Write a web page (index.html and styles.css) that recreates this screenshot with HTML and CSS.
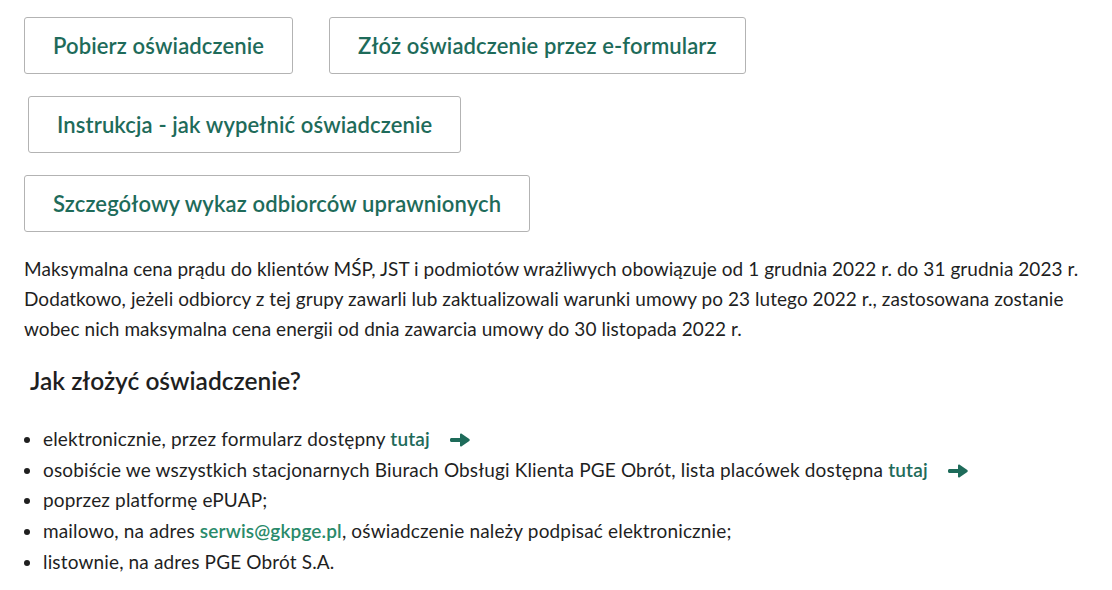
FILE: index.html
```html
<!DOCTYPE html>
<html lang="pl">
<head>
<meta charset="utf-8">
<title>Oświadczenie</title>
<link rel="stylesheet" href="styles.css">
</head>
<body>
	<div id="content">
		<div class="buttons">
			<a class="btn" href="#">Pobierz oświadczenie</a>
			<a class="btn" href="#">Złóż oświadczenie przez e-formularz</a>
		</div>
		<div class="buttons">
			<a class="btn shifted" href="#">Instrukcja - jak wypełnić oświadczenie</a>
		</div>
		<div class="buttons">
			<a class="btn" href="#">Szczegółowy wykaz odbiorców uprawnionych</a>
		</div>

		<p class="lead">Maksymalna cena prądu do klientów MŚP, JST i podmiotów wrażliwych obowiązuje od 1 grudnia 2022 r. do 31 grudnia 2023 r. Dodatkowo, jeżeli odbiorcy z tej grupy zawarli lub zaktualizowali warunki umowy po 23 lutego 2022 r., zastosowana zostanie wobec nich maksymalna cena energii od dnia zawarcia umowy do 30 listopada 2022 r.</p>

		<h3>Jak złożyć oświadczenie?</h3>

		<ul class="ways">
			<li>elektronicznie, przez formularz dostępny <a href="#">tutaj</a>
				<svg class="arrow" viewBox="0 0 20 14"><path d="M1.5 5h8.5V1.6c0-.9 1-1.4 1.7-.9l7.6 5.4c.6.4.6 1.4 0 1.8l-7.6 5.4c-.7.5-1.7 0-1.7-.9V9H1.5C.7 9 0 8.3 0 7.5v-1C0 5.7.7 5 1.5 5z"/></svg>
			</li>
			<li>osobiście we wszystkich stacjonarnych Biurach Obsługi Klienta PGE Obrót, lista placówek dostępna <a href="#">tutaj</a>
				<svg class="arrow" viewBox="0 0 20 14"><path d="M1.5 5h8.5V1.6c0-.9 1-1.4 1.7-.9l7.6 5.4c.6.4.6 1.4 0 1.8l-7.6 5.4c-.7.5-1.7 0-1.7-.9V9H1.5C.7 9 0 8.3 0 7.5v-1C0 5.7.7 5 1.5 5z"/></svg>
			</li>
			<li>poprzez platformę ePUAP;</li>
			<li>mailowo, na adres <a class="mail" href="#">serwis@gkpge.pl</a>, oświadczenie należy podpisać elektronicznie;</li>
			<li>listownie, na adres PGE Obrót S.A.</li>
		</ul>
	</div>
</body>
</html>
```

FILE: styles.css
```css
body {
	margin: 0;
	background: #fff;
	color: #1f1f1f;
	font-family: Lato, "Noto Sans", sans-serif;
}
#content {
	padding: 17px 20px 0 24px;
}
.buttons {
	display: flex;
	gap: 36px;
	margin-bottom: 22px;
}
.btn {
	display: block;
	height: 55px;
	line-height: 55px;
	padding: 0 28px;
	border: 1px solid #b3b3b3;
	border-radius: 3px;
	color: #1e6b5a;
	font-size: 22px;
	font-weight: 600;
	letter-spacing: 0.12px;
	text-decoration: none;
}
.btn.shifted {
	margin-left: 4px;
}
.lead {
	margin: 0;
	font-size: 19px;
	letter-spacing: 0.05px;
	line-height: 30px;
}
h3 {
	margin: 22px 0 0 6px;
	font-size: 24.5px;
	font-weight: 600;
	line-height: 30px;
}
.ways {
	margin: 28px 0 0 0;
	padding: 0 0 0 19px;
	font-size: 19px;
	letter-spacing: 0.15px;
	line-height: 30.7px;
}
.ways a {
	color: #1e6b5a;
	font-weight: 600;
	text-decoration: none;
}
.ways a.mail {
	color: #2a8a6a;
}
.arrow {
	width: 20px;
	height: 14px;
	margin-left: 15px;
	fill: #1e6b5a;
	vertical-align: -1px;
}
```
